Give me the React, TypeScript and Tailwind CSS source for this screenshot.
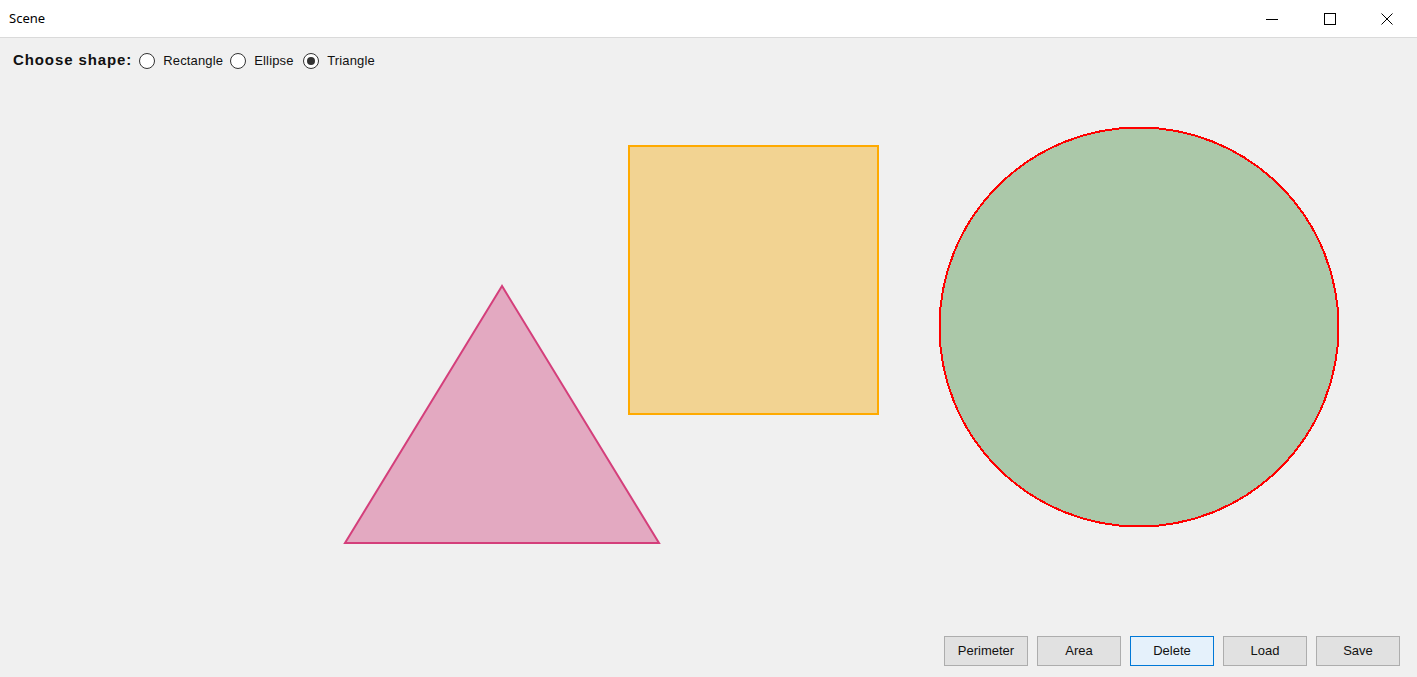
import React, { useState } from "react";

const shapes = [
  { label: "Rectangle", width: "w-[91px]" },
  { label: "Ellipse", width: "w-[73px]" },
  { label: "Triangle", width: "w-[80px]" },
];
const buttons = ["Perimeter", "Area", "Delete", "Load", "Save"];

function Radio({
  label,
  checked,
  className,
  onClick,
}: {
  label: string;
  checked: boolean;
  className: string;
  onClick: () => void;
}) {
  return (
    <button type="button" onClick={onClick} className={"flex items-center gap-[8px] " + className}>
      <span className="flex h-[16px] w-[16px] shrink-0 items-center justify-center rounded-full border border-[#333] bg-white">
        {checked && <span className="h-[8px] w-[8px] rounded-full bg-[#333]" />}
      </span>
      <span className="text-[13px] tracking-[0.15px] text-[#111]">{label}</span>
    </button>
  );
}

export default function App() {
  const [shape, setShape] = useState("Triangle");

  return (
    <div
      className="flex h-[677px] w-[1417px] flex-col overflow-hidden bg-[#f0f0f0]"
      style={{ fontFamily: '"Liberation Sans", Arial, sans-serif' }}
    >
      {/* Title bar */}
      <div className="flex h-[38px] shrink-0 items-center justify-between border-b border-[#dadada] bg-white">
        <span className="pl-[9px] text-[13px] text-black" style={{ fontFamily: '"Noto Sans", sans-serif' }}>
          Scene
        </span>
        <div className="flex h-full">
          <div className="flex w-[58px] items-center justify-center">
            <svg width="12" height="12" viewBox="0 0 12 12">
              <path d="M0 6.5h12" stroke="#000" strokeWidth="1" />
            </svg>
          </div>
          <div className="flex w-[58px] items-center justify-center">
            <svg width="12" height="12" viewBox="0 0 12 12">
              <rect x="0.5" y="0.5" width="11" height="11" fill="none" stroke="#000" strokeWidth="1" />
            </svg>
          </div>
          <div className="flex w-[58px] items-center justify-center pr-[2px]">
            <svg width="12" height="12" viewBox="0 0 12 12">
              <path d="M0.5 0.5l11 11M11.5 0.5l-11 11" stroke="#000" strokeWidth="1" />
            </svg>
          </div>
        </div>
      </div>

      {/* Shape chooser */}
      <div className="flex h-[44px] shrink-0 items-center pl-[13px] pt-[1px]">
        <span className="mr-[7px] text-[15px] font-bold tracking-[0.9px] text-[#111]">Choose shape:</span>
        <div className="flex items-center">
          {shapes.map((s) => (
            <Radio
              key={s.label}
              label={s.label}
              className={s.width}
              checked={shape === s.label}
              onClick={() => setShape(s.label)}
            />
          ))}
        </div>
      </div>

      {/* Drawing canvas */}
      <div className="relative flex-1">
        <svg className="absolute inset-0" width="1417" height="544" viewBox="0 82 1417 544">
          <polygon points="502,286 345,543 659,543" fill="#e3a9c1" stroke="#d43f7b" strokeWidth="2" />
          <rect x="629" y="146" width="249" height="268" fill="#f2d392" stroke="#ffaa00" strokeWidth="2" />
          <circle
            cx="1139"
            cy="327"
            r="199.5"
            fill="#abc8a9"
            stroke="#ff0000"
            strokeWidth="2"
            shapeRendering="crispEdges"
          />
        </svg>
      </div>

      {/* Buttons */}
      <div className="flex shrink-0 justify-end gap-[9px] pb-[11px] pr-[17px] pt-[10px]">
        {buttons.map((b) => (
          <button
            key={b}
            type="button"
            className={
              b === "Delete"
                ? "h-[30px] w-[84px] border border-[#0078d7] bg-[#e5f1fb] text-[13px] text-[#111]"
                : "h-[30px] w-[84px] border border-[#adadad] bg-[#e1e1e1] text-[13px] text-[#111]"
            }
          >
            {b}
          </button>
        ))}
      </div>
    </div>
  );
}
